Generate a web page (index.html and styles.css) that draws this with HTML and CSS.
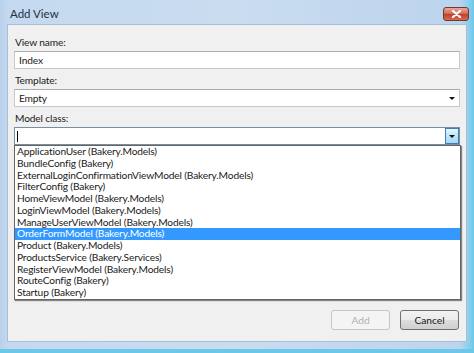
FILE: index.html
```html
<!DOCTYPE html>
<html lang="en">
<head>
  <meta charset="UTF-8">
  <title>Add View</title>
  <link rel="stylesheet" href="styles.css">
</head>
<body>
  <div class="window">
    <div class="title-bar">
      <span class="title">Add View</span>
      <button class="close-btn" aria-label="Close">
        <svg width="11" height="8" viewBox="0 0 11 8"><path d="M2 1 L9 7 M9 1 L2 7" stroke="#fff" stroke-width="2.2" stroke-linecap="round"/></svg>
      </button>
    </div>
    <div class="client">
      <div class="field">
        <label>View name:</label>
        <div class="textbox">Index</div>
      </div>
      <div class="field">
        <label>Template:</label>
        <div class="textbox select">Empty<span class="arrow"></span></div>
      </div>
      <div class="field combo-field">
        <label>Model class:</label>
        <div class="textbox combo"><span class="caret"></span><span class="drop-btn"><span class="arrow"></span></span></div>
        <ul class="dropdown">
          <li>ApplicationUser (Bakery.Models)</li>
          <li>BundleConfig (Bakery)</li>
          <li>ExternalLoginConfirmationViewModel (Bakery.Models)</li>
          <li>FilterConfig (Bakery)</li>
          <li>HomeViewModel (Bakery.Models)</li>
          <li>LoginViewModel (Bakery.Models)</li>
          <li>ManageUserViewModel (Bakery.Models)</li>
          <li class="selected">OrderFormModel (Bakery.Models)</li>
          <li>Product (Bakery.Models)</li>
          <li>ProductsService (Bakery.Services)</li>
          <li>RegisterViewModel (Bakery.Models)</li>
          <li>RouteConfig (Bakery)</li>
          <li>Startup (Bakery)</li>
        </ul>
      </div>
      <div class="buttons">
        <button class="btn" disabled>Add</button>
        <button class="btn">Cancel</button>
      </div>
    </div>
  </div>
</body>
</html>
```

FILE: styles.css
```css
body {
  margin: 0;
  font-family: Lato, "Noto Sans", sans-serif;
  font-size: 10.2px;
  letter-spacing: -0.15px;
  color: #1a1a1a;
  background: #6cc8e8;
}

.window {
  width: 474px;
  height: 353px;
  box-sizing: border-box;
  padding: 0 7px 7px 7px;
  display: flex;
  flex-direction: column;
  background: linear-gradient(to right, #b8d0ea 0, #c4d9ef 8px, #c9dcf0 50%, #bcd4ed 460px, #8fd0f0 468px, #6cc8e8 100%);
  border-bottom: 4px solid #6cc8e8;
}

.title-bar {
  height: 24px;
  display: flex;
  align-items: center;
  justify-content: space-between;
  padding: 0 0 0 3px;
}

.title {
  color: #1e2f44;
  font-size: 11.5px;
  letter-spacing: 0;
  padding-top: 2px;
}

.close-btn {
  width: 26px;
  height: 14px;
  margin-right: -2px;
  margin-top: 4px;
  padding: 0;
  border: 1px solid #6d3b36;
  border-radius: 3px;
  background: linear-gradient(#e9a99a, #d4644e 50%, #c0402a 51%, #d86a4f);
  display: flex;
  align-items: center;
  justify-content: center;
}

.client {
  flex: 1;
  background: #f0f0f0;
  border: 1px solid #a8bed6;
  padding: 10px 6px 11px 6px;
  display: flex;
  flex-direction: column;
  gap: 4px;
}

.field {
  display: flex;
  flex-direction: column;
  gap: 2px;
}

.field label {
  line-height: 14px;
  padding-left: 1px;
}

.textbox {
  height: 18px;
  box-sizing: border-box;
  border: 1px solid #c5c8cd;
  border-top-color: #abadb3;
  background: #fff;
  padding: 0 4px;
  line-height: 16px;
  display: flex;
  align-items: center;
  position: relative;
}

.arrow {
  width: 0;
  height: 0;
  border-left: 3px solid transparent;
  border-right: 3px solid transparent;
  border-top: 3px solid #111;
}

.select .arrow {
  position: absolute;
  right: 4px;
  top: 7px;
}

.combo {
  border-color: #7a8ea3;
  padding: 0 2px;
}

.caret {
  width: 1px;
  height: 11px;
  background: #000;
}

.drop-btn {
  position: absolute;
  right: 0;
  top: 0;
  bottom: 0;
  width: 12px;
  border: 1px solid #3c7fb1;
  background: linear-gradient(#e8f5fc, #bde4f7 50%, #a7d9f5);
  display: flex;
  align-items: center;
  justify-content: center;
}

.combo-field {
  position: relative;
}

.dropdown {
  position: absolute;
  left: 0;
  right: -1px;
  top: 34px;
  margin: 0;
  padding: 0;
  list-style: none;
  background: #fff;
  border: 1px solid #646464;
  box-shadow: 1px 1px 1px rgba(0, 0, 0, 0.45);
  z-index: 2;
}

.dropdown li {
  height: 11.75px;
  line-height: 11.75px;
  padding-left: 2px;
  white-space: nowrap;
}

.dropdown li.selected {
  background: #3399ff;
  color: #fff;
}

.buttons {
  margin-top: auto;
  display: flex;
  justify-content: flex-end;
  gap: 10px;
  padding-right: 1px;
}

.btn {
  width: 59px;
  height: 20px;
  font-family: inherit;
  font-size: 10.2px;
  color: #1a1a1a;
  border: 1px solid #707070;
  border-radius: 3px;
  background: linear-gradient(#f2f2f2, #ebebeb 50%, #dddddd 51%, #cfcfcf);
  padding: 0;
}

.btn:disabled {
  color: #adb2b5;
  border-color: #c5c5c5;
  background: #f4f4f4;
}
```
